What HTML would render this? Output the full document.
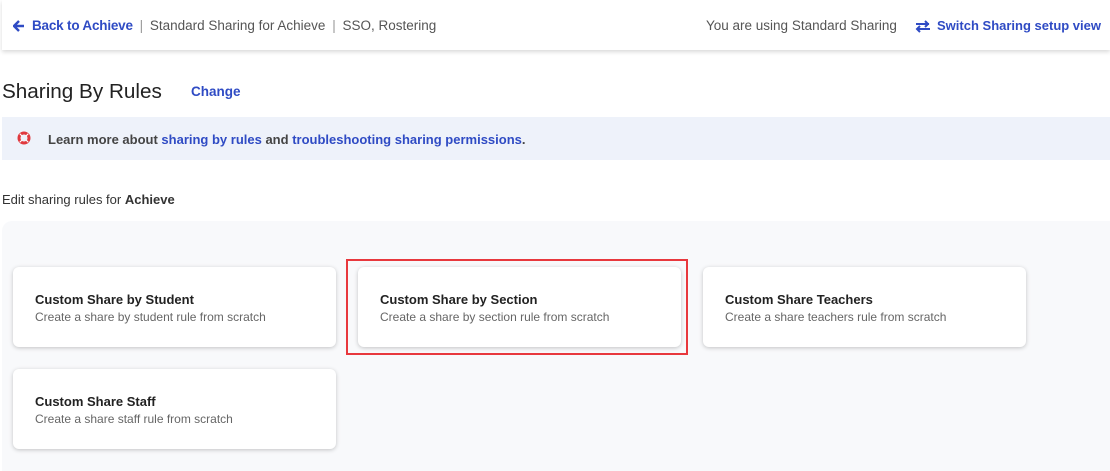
<!DOCTYPE html>
<html><head><style>
*{box-sizing:border-box;margin:0;padding:0}
body{width:1110px;height:462px;overflow:hidden;background:#fff;font-family:"Liberation Sans",sans-serif;position:relative;color:#222}
.hdr{position:absolute;left:2px;top:0;width:1108px;height:50px;background:#fff;box-shadow:0 2px 4px rgba(0,0,0,.15);font-size:13px;color:#555}
.a{color:#2f4bc4;font-weight:bold}
.abs{position:absolute;white-space:nowrap}
.panel{position:absolute;left:2px;top:221px;width:1108px;height:250px;background:#f8f9fb;border-radius:10px 0 0 0}
.card{position:absolute;width:323px;height:80px;background:#fff;border-radius:6px;box-shadow:0 1px 4px rgba(0,0,0,.22)}
.card b{position:absolute;left:22px;top:25px;font-size:13px;color:#222}
.card span{position:absolute;left:22px;top:43px;font-size:12px;color:#666}
</style></head><body>
<div class="hdr">
<svg class="abs" style="left:11px;top:20px" width="12" height="12" viewBox="0 0 12 12"><path d="M6 1L1 6l5 5M1 6h10" stroke="#2f4bc4" stroke-width="2.4" fill="none"/></svg>
<div class="abs" style="left:30px;top:18px;font-size:13.5px"><span class="a" style="letter-spacing:-.2px">Back to Achieve</span> <span style="color:#999;margin:0 3px">|</span> Standard Sharing for Achieve <span style="color:#999;margin:0 3px">|</span> SSO, Rostering</div>
<div class="abs" style="left:704px;top:18px;font-size:13.5px">You are using Standard Sharing</div>
<svg class="abs" style="left:913px;top:20px" width="16" height="13" viewBox="0 0 16 13"><path d="M1 4h13M10 1l3 3-3 3M15 9H2M5 6l-3 3 3 3" stroke="#2f4bc4" stroke-width="2" fill="none"/></svg>
<div class="abs a" style="right:9px;top:18px;font-size:13px">Switch Sharing setup view</div>
</div>
<div class="abs" style="left:2px;top:80px;font-size:20.7px;color:#222">Sharing By Rules</div>
<div class="abs a" style="left:191px;top:84px;font-size:13.5px">Change</div>
<div class="abs" style="left:2px;top:117px;width:1108px;height:43px;background:#eef2fa"></div>
<svg class="abs" style="left:17px;top:131px" width="14" height="14" viewBox="0 0 14 14"><circle cx="7" cy="7" r="5" stroke="#e0393e" stroke-width="3" fill="none"/><path d="M1 7h3M10 7h3M7 1v3M7 10v3" stroke="#fff" stroke-width="1.2" transform="rotate(45 7 7)"/></svg>
<div class="abs" style="left:48px;top:132px;font-size:13px;color:#444;font-weight:bold">Learn more about <span style="color:#2f4bc4">sharing by rules</span> and <span style="color:#2f4bc4">troubleshooting sharing permissions</span>.</div>
<div class="abs" style="left:2px;top:192px;font-size:13px;color:#333">Edit sharing rules for <b>Achieve</b></div>
<div class="panel"></div>
<div class="card" style="left:13px;top:267px"><b>Custom Share by Student</b><span>Create a share by student rule from scratch</span></div>
<div class="card" style="left:358px;top:267px"><b>Custom Share by Section</b><span>Create a share by section rule from scratch</span></div>
<div class="card" style="left:703px;top:267px"><b>Custom Share Teachers</b><span>Create a share teachers rule from scratch</span></div>
<div class="card" style="left:13px;top:369px"><b>Custom Share Staff</b><span>Create a share staff rule from scratch</span></div>
<div class="abs" style="left:346px;top:259px;width:342px;height:96px;border:2.5px solid #e8383d"></div>
</body></html>
